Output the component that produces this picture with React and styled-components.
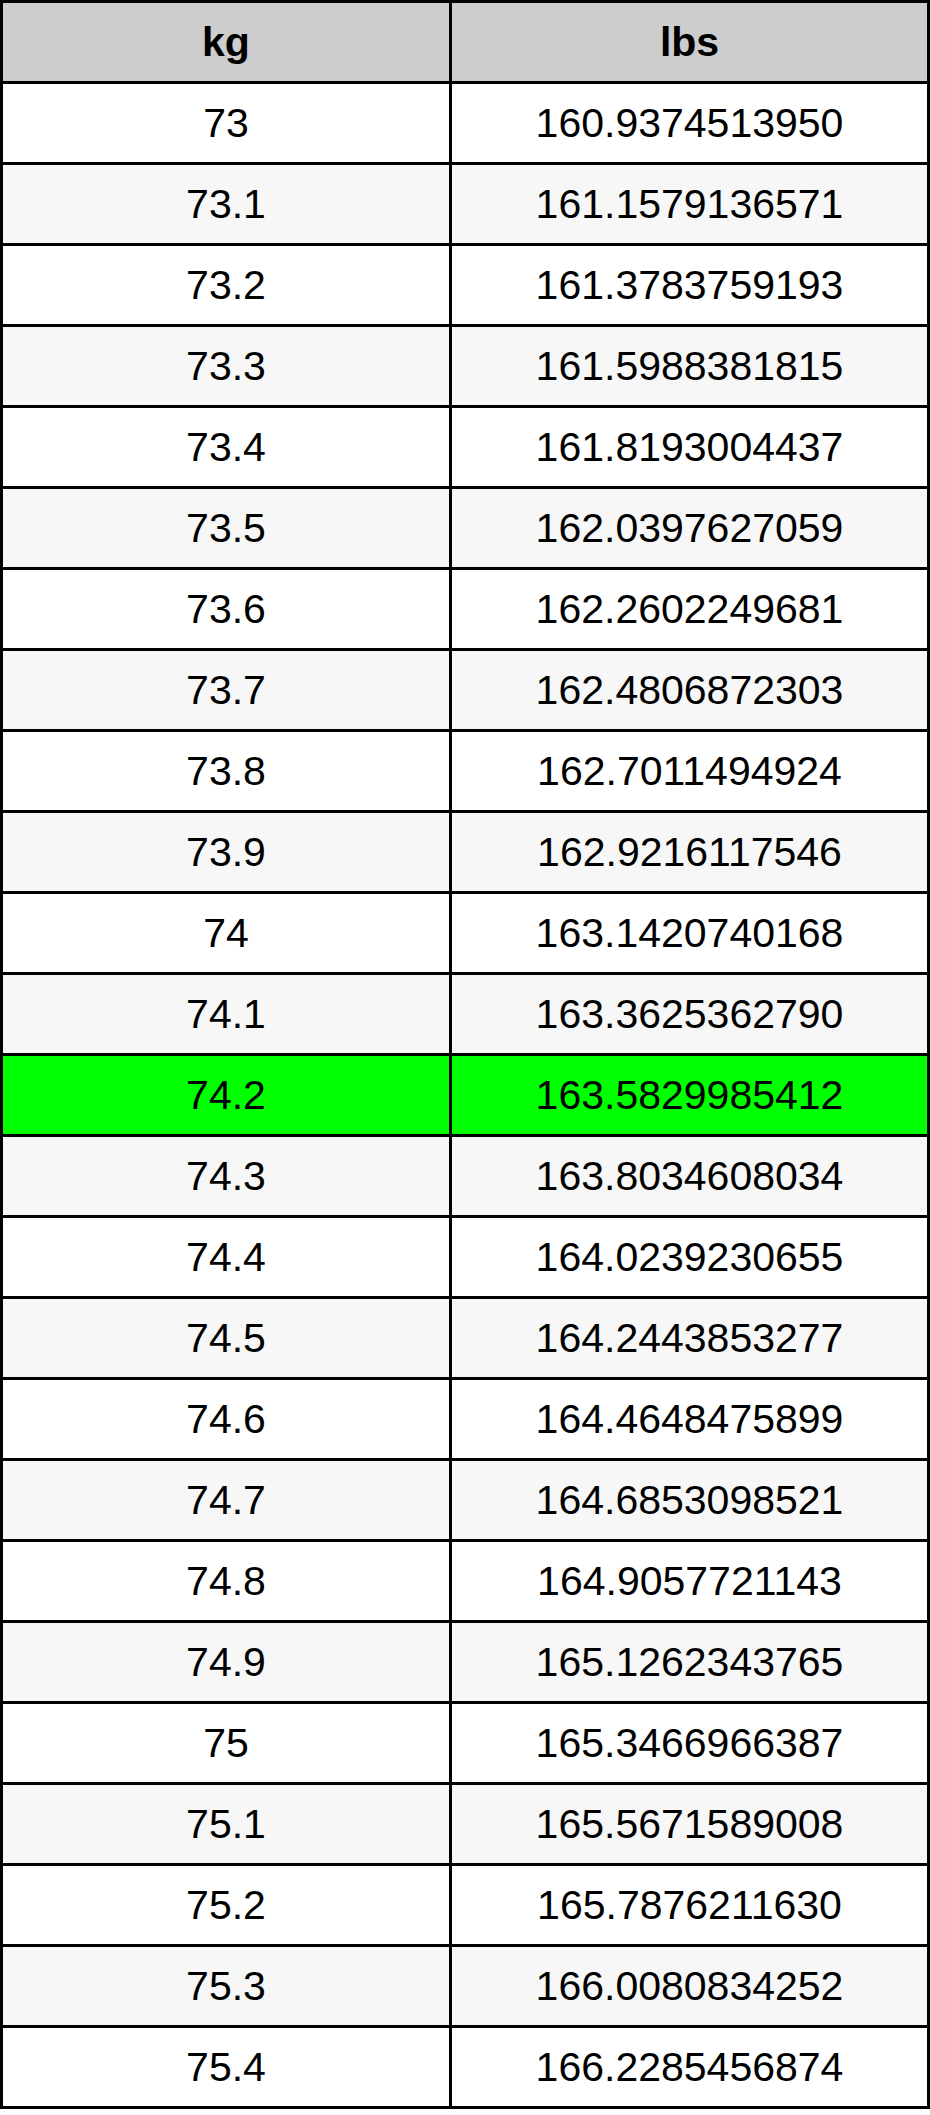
import React from "react";
import styled, { createGlobalStyle } from "styled-components";

const GlobalStyle = createGlobalStyle`
  body {
    margin: 0;
    background: #fff;
    font-family: "Liberation Sans", Arial, sans-serif;
  }
`;

const Table = styled.div`
  width: 930px;
  box-sizing: border-box;
  border-top: 3px solid #000;
  border-left: 3px solid #000;
  color: #000;
`;

const Row = styled.div`
  display: grid;
  grid-template-columns: 449px 478px;
  background: ${(p) => p.$bg};
`;

const Cell = styled.div`
  height: 78px;
  line-height: 78px;
  border-right: 3px solid #000;
  border-bottom: 3px solid #000;
  text-align: center;
  font-size: 41px;
  font-weight: ${(p) => (p.$head ? "bold" : "normal")};
  white-space: nowrap;
`;

const rows = [
  ["73", "160.9374513950"],
  ["73.1", "161.1579136571"],
  ["73.2", "161.3783759193"],
  ["73.3", "161.5988381815"],
  ["73.4", "161.8193004437"],
  ["73.5", "162.0397627059"],
  ["73.6", "162.2602249681"],
  ["73.7", "162.4806872303"],
  ["73.8", "162.7011494924"],
  ["73.9", "162.9216117546"],
  ["74", "163.1420740168"],
  ["74.1", "163.3625362790"],
  ["74.2", "163.5829985412"],
  ["74.3", "163.8034608034"],
  ["74.4", "164.0239230655"],
  ["74.5", "164.2443853277"],
  ["74.6", "164.4648475899"],
  ["74.7", "164.6853098521"],
  ["74.8", "164.9057721143"],
  ["74.9", "165.1262343765"],
  ["75", "165.3466966387"],
  ["75.1", "165.5671589008"],
  ["75.2", "165.7876211630"],
  ["75.3", "166.0080834252"],
  ["75.4", "166.2285456874"],
];

export default function App() {
  return (
    <>
      <GlobalStyle />
      <Table>
        <Row $bg="#cdcdcd">
          <Cell $head>kg</Cell>
          <Cell $head>lbs</Cell>
        </Row>
        {rows.map(([kg, lbs], i) => {
          let bg = i % 2 === 0 ? "#ffffff" : "#f7f7f7";
          if (kg === "74.2") bg = "#00ff00";
          return (
            <Row key={kg} $bg={bg}>
              <Cell>{kg}</Cell>
              <Cell>{lbs}</Cell>
            </Row>
          );
        })}
      </Table>
    </>
  );
}
